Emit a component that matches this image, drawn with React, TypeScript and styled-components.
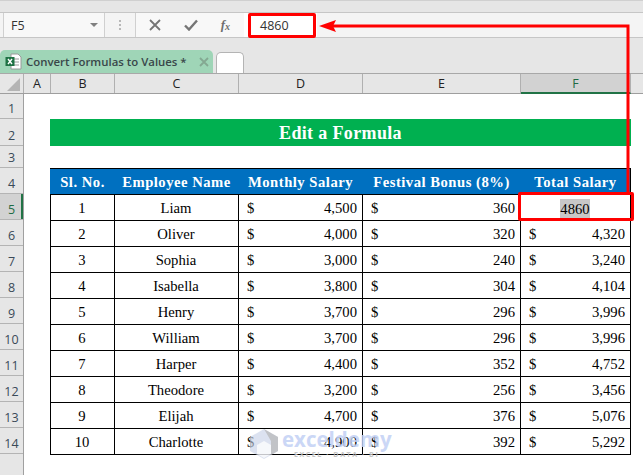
import { styled, createGlobalStyle } from 'styled-components';

const COLUMNS = [
  { label: 'A', width: 27 },
  { label: 'B', width: 64 },
  { label: 'C', width: 124 },
  { label: 'D', width: 124 },
  { label: 'E', width: 158 },
  { label: 'F', width: 110, active: true },
];

const ROW_HEADS = [
  { label: 1, height: 25 },
  { label: 2, height: 27 },
  { label: 3, height: 22 },
  { label: 4, height: 26 },
  { label: 5, height: 26, active: true },
  ...[6, 7, 8, 9, 10, 11, 12, 13, 14].map((label) => ({ label, height: 26 })),
];

const SALARIES = [
  { id: 1, name: 'Liam', salary: '4,500', bonus: '360', total: '' },
  { id: 2, name: 'Oliver', salary: '4,000', bonus: '320', total: '4,320' },
  { id: 3, name: 'Sophia', salary: '3,000', bonus: '240', total: '3,240' },
  { id: 4, name: 'Isabella', salary: '3,800', bonus: '304', total: '4,104' },
  { id: 5, name: 'Henry', salary: '3,700', bonus: '296', total: '3,996' },
  { id: 6, name: 'William', salary: '3,700', bonus: '296', total: '3,996' },
  { id: 7, name: 'Harper', salary: '4,400', bonus: '352', total: '4,752' },
  { id: 8, name: 'Theodore', salary: '3,200', bonus: '256', total: '3,456' },
  { id: 9, name: 'Elijah', salary: '4,700', bonus: '376', total: '5,076' },
  { id: 10, name: 'Charlotte', salary: '4,900', bonus: '392', total: '5,292' },
];

const HEADINGS = ['Sl. No.', 'Employee Name', 'Monthly Salary', 'Festival Bonus (8%)', 'Total Salary'];

function ExcelIcon() {
  return (
    <svg width="17" height="17" viewBox="0 0 17 17">
      <path d="M6 1h7l3 3v12H6z" fill="#fff" stroke="#9a9a9a" />
      <path d="M9 6h5M9 9h5M9 12h5" stroke="#9a9a9a" />
      <rect x="0.5" y="4" width="9" height="9" fill="#1f7244" />
      <path d="M3 6l4 5M7 6l-4 5" stroke="#fff" strokeWidth="1.4" />
    </svg>
  );
}

function Overlay() {
  return (
    <Arrows width="643" height="475" viewBox="0 0 643 475">
      <path d="M628 193V26H330" fill="none" stroke="#ff0000" strokeWidth="3" />
      <path d="M319 26l17-6-3 6 3 6z" fill="#ff0000" />
    </Arrows>
  );
}

export default function App() {
  return (
    <Screen>
      <GlobalStyle />
      <TopStrip />
      <FormulaBar>
        <NameBox>
          F5
          <Caret />
        </NameBox>
        <Grip>
          <i />
          <i />
          <i />
        </Grip>
        <FormulaButtons>
          <svg width="12" height="12" viewBox="0 0 12 12">
            <path d="M1 1l10 10M11 1L1 11" stroke="#757575" strokeWidth="1.8" />
          </svg>
          <svg width="14" height="12" viewBox="0 0 14 12">
            <path d="M1 6.5l4 4 8-9" fill="none" stroke="#757575" strokeWidth="2.4" />
          </svg>
          <FxLabel>
            f<sub>x</sub>
          </FxLabel>
        </FormulaButtons>
        <FormulaInput>4860</FormulaInput>
      </FormulaBar>
      <TabBar>
        <ActiveTab>
          <ExcelIcon />
          <TabTitle>Convert Formulas to Values *</TabTitle>
          <svg width="10" height="10" viewBox="0 0 10 10">
            <path d="M1 1l8 8M9 1L1 9" stroke="#84a892" strokeWidth="1.8" />
          </svg>
        </ActiveTab>
        <NewTab />
      </TabBar>
      <ColumnBar>
        <Corner>
          <svg width="14" height="14" viewBox="0 0 14 14">
            <path d="M14 1v13H1z" fill="#b4b4b4" />
          </svg>
        </Corner>
        {COLUMNS.map((col) => (
          <ColumnHead key={col.label} $width={col.width} $active={col.active}>
            {col.label}
          </ColumnHead>
        ))}
      </ColumnBar>
      <SheetBody>
        <RowBar>
          {ROW_HEADS.map((row) => (
            <RowHead key={row.label} $height={row.height} $active={row.active}>
              {row.label}
            </RowHead>
          ))}
        </RowBar>
        <Sheet>
          <Banner>Edit a Formula</Banner>
          <SalaryTable>
            {HEADINGS.map((heading) => (
              <HeadCell key={heading}>{heading}</HeadCell>
            ))}
            {SALARIES.map((row) => (
              <Row key={row.id}>
                <Cell>{row.id}</Cell>
                <Cell>{row.name}</Cell>
                <MoneyCell>
                  <span>$</span>
                  <span>{row.salary}</span>
                </MoneyCell>
                <MoneyCell>
                  <span>$</span>
                  <span>{row.bonus}</span>
                </MoneyCell>
                {row.total ? (
                  <MoneyCell>
                    <span>$</span>
                    <span>{row.total}</span>
                  </MoneyCell>
                ) : (
                  <Cell>
                    <Editing>4860</Editing>
                  </Cell>
                )}
              </Row>
            ))}
          </SalaryTable>
        </Sheet>
      </SheetBody>
      <Overlay />
      <CellMark />
      <FormulaMark />
      <Watermark>
        <svg width="30" height="32" viewBox="0 0 30 32">
          <path d="M15 1l14 8v14l-14 8-14-8V9z" fill="#c9d3e8" opacity="0.75" />
          <path d="M15 1l14 8v14l-7 4V13z" fill="#a9a9a9" opacity="0.7" />
          <path d="M15 13l7 4v9l-7 4-7-4v-9z" fill="#fff" opacity="0.75" />
        </svg>
        <WatermarkText>
          <WatermarkName>exceldemy</WatermarkName>
          <WatermarkTag>EXCEL · DATA · BI</WatermarkTag>
        </WatermarkText>
      </Watermark>
    </Screen>
  );
}

const GlobalStyle = createGlobalStyle`
  html, body {
    margin: 0;
    padding: 0;
    background: #fff;
    overflow: hidden;
  }
`;

const Screen = styled.div`
  position: relative;
  width: 643px;
  height: 475px;
  overflow: hidden;
  display: flex;
  flex-direction: column;
  background: #fff;
  font-family: 'Open Sans', 'Liberation Sans', sans-serif;
  color: #222;
`;

const TopStrip = styled.div`
  height: 13px;
  box-sizing: border-box;
  background: #e6e6e6;
  border-top: 1px solid #d0d0d0;
  border-bottom: 1px solid #c6c6c6;
`;

const FormulaBar = styled.div`
  height: 25px;
  box-sizing: border-box;
  display: flex;
  align-items: stretch;
  padding-left: 3px;
  background: #f4f4f4;
  border-bottom: 1px solid #c6c6c6;
`;

const NameBox = styled.div`
  position: relative;
  width: 102px;
  box-sizing: border-box;
  padding-left: 7px;
  display: flex;
  align-items: center;
  font-size: 12.5px;
  color: #333;
  background: #f8f8f8;
  border-left: 1px solid #d0d0d0;
  border-right: 1px solid #d0d0d0;
`;

const Caret = styled.span`
  position: absolute;
  right: 6px;
  top: 10px;
  border-left: 4px solid transparent;
  border-right: 4px solid transparent;
  border-top: 4px solid #808080;
`;

const Grip = styled.div`
  width: 30px;
  display: flex;
  flex-direction: column;
  align-items: center;
  justify-content: center;
  gap: 2px;

  i {
    width: 2px;
    height: 2px;
    background: #b8b8b8;
  }
`;

const FormulaButtons = styled.div`
  width: 109px;
  box-sizing: border-box;
  display: flex;
  align-items: center;
  justify-content: space-between;
  padding: 0 14px 0 13px;
  background: #f8f8f8;
  border-left: 1px solid #d0d0d0;
`;

const FxLabel = styled.span`
  font-family: 'Liberation Serif', serif;
  font-style: italic;
  font-weight: 700;
  font-size: 13px;
  color: #6e6e6e;

  sub {
    font-size: 10px;
    vertical-align: -1px;
  }
`;

const FormulaInput = styled.div`
  width: 73px;
  box-sizing: border-box;
  display: flex;
  align-items: center;
  padding-left: 16px;
  font-size: 12.5px;
  color: #333;
  background: #fff;
`;

const TabBar = styled.div`
  height: 36px;
  box-sizing: border-box;
  display: flex;
  align-items: flex-end;
  background: #e6e6e6;
  border-bottom: 1px solid #a8a8a8;
`;

const ActiveTab = styled.div`
  width: 213px;
  height: 23px;
  box-sizing: border-box;
  display: flex;
  align-items: center;
  padding-left: 5px;
  gap: 4px;
  background: #9fd5b7;
  border-radius: 5px 5px 0 0;
`;

const TabTitle = styled.span`
  width: 169px;
  white-space: nowrap;
  font-size: 11.4px;
  font-weight: 600;
  color: #39474a;
`;

const NewTab = styled.div`
  width: 28px;
  height: 21px;
  box-sizing: border-box;
  margin-left: 3px;
  background: #fff;
  border: 1px solid #b4b4b4;
  border-bottom: none;
  border-radius: 5px 5px 0 0;
`;

const ColumnBar = styled.div`
  height: 20px;
  box-sizing: border-box;
  display: flex;
  background: #e6e6e6;
  border-bottom: 1px solid #9e9e9e;
`;

const Corner = styled.div`
  width: 24px;
  box-sizing: border-box;
  display: flex;
  justify-content: flex-end;
  align-items: flex-end;
  padding: 0 3px 2px 0;
  border-right: 1px solid #b0b0b0;
`;

const ColumnHead = styled.div<{ $width: number; $active?: boolean }>`
  width: ${(p) => p.$width}px;
  box-sizing: border-box;
  display: flex;
  align-items: center;
  justify-content: center;
  font-size: 12.5px;
  color: ${(p) => (p.$active ? '#1f6b43' : '#222')};
  background: ${(p) => (p.$active ? '#d2d2d2' : 'transparent')};
  border-right: 1px solid #b0b0b0;
  height: ${(p) => (p.$active ? '20px' : 'auto')};
  border-bottom: ${(p) => (p.$active ? '2px solid #217346' : 'none')};
`;

const SheetBody = styled.div`
  flex: 1;
  display: flex;
`;

const RowBar = styled.div`
  width: 24px;
  box-sizing: border-box;
  background: #e6e6e6;
  border-right: 1px solid #a0a0a0;
`;

const RowHead = styled.div<{ $height: number; $active?: boolean }>`
  height: ${(p) => p.$height}px;
  box-sizing: border-box;
  display: flex;
  align-items: flex-end;
  justify-content: center;
  padding-bottom: 1px;
  line-height: 16px;
  font-size: 12.5px;
  color: ${(p) => (p.$active ? '#1f6b43' : '#3a4a58')};
  background: ${(p) => (p.$active ? '#d2d2d2' : 'transparent')};
  border-bottom: 1px solid #b4b4b4;
  box-shadow: ${(p) => (p.$active ? 'inset -2px 0 0 #217346' : 'none')};
`;

const Sheet = styled.div`
  flex: 1;
  padding: 25px 0 0 26px;
  font-family: 'Liberation Serif', serif;
  font-size: 14.67px;
  color: #000;
`;

const Banner = styled.div`
  width: 581px;
  height: 27px;
  box-sizing: border-box;
  padding-top: 1px;
  margin-bottom: 22px;
  display: flex;
  align-items: center;
  justify-content: center;
  background: #00b050;
  color: #fff;
  font-size: 18px;
  font-weight: 700;
  letter-spacing: 0.35px;
`;

const SalaryTable = styled.div`
  width: 581px;
  box-sizing: border-box;
  display: grid;
  grid-template-columns: 64px 124px 124px 158px 110px;
  grid-auto-rows: 26px;
  border-top: 1px solid #000;
  border-left: 1px solid #000;
`;

const HeadCell = styled.div`
  display: flex;
  align-items: center;
  justify-content: center;
  box-sizing: border-box;
  margin-left: -1px;
  padding: 1px 0 0 1px;
  background: #0070c0;
  color: #fff;
  font-weight: 700;
  font-size: 14.67px;
  letter-spacing: 0.5px;
  white-space: nowrap;
  border-right: 1px solid #000;
  border-bottom: 1px solid #000;
`;

const Row = styled.div`
  display: contents;
`;

const Cell = styled.div`
  display: flex;
  align-items: center;
  justify-content: center;
  box-sizing: border-box;
  margin-left: -1px;
  padding-top: 2px;
  border-right: 1px solid #000;
  border-bottom: 1px solid #000;
`;

const MoneyCell = styled(Cell)`
  justify-content: space-between;
  padding: 2px 5px 0 9px;
`;

const Editing = styled.span`
  background: #c8c8c8;
  padding: 2px 0;
  line-height: 16px;
`;

const Arrows = styled.svg`
  position: absolute;
  left: 0;
  top: 0;
  pointer-events: none;
`;

const FormulaMark = styled.div`
  position: absolute;
  left: 248px;
  top: 13px;
  width: 68px;
  height: 25px;
  box-sizing: border-box;
  border: 3px solid #ff0000;
  border-radius: 2px;
`;

const CellMark = styled.div`
  position: absolute;
  left: 518px;
  top: 192px;
  width: 116px;
  height: 29px;
  box-sizing: border-box;
  border: 3px solid #ff0000;
  border-radius: 2px;
`;

const Watermark = styled.div`
  position: absolute;
  left: 249px;
  top: 428px;
  display: flex;
  gap: 3px;
  opacity: 0.85;
  pointer-events: none;
`;

const WatermarkText = styled.div`
  display: flex;
  flex-direction: column;
  align-items: flex-start;
  font-family: 'Open Sans', sans-serif;
`;

const WatermarkName = styled.span`
  font-size: 20.5px;
  line-height: 22px;
  font-weight: 700;
  color: #c2d1f5;
`;

const WatermarkTag = styled.span`
  padding-left: 12px;
  font-size: 7px;
  line-height: 9px;
  font-weight: 700;
  letter-spacing: 1.6px;
  color: #bdbdbd;
`;
